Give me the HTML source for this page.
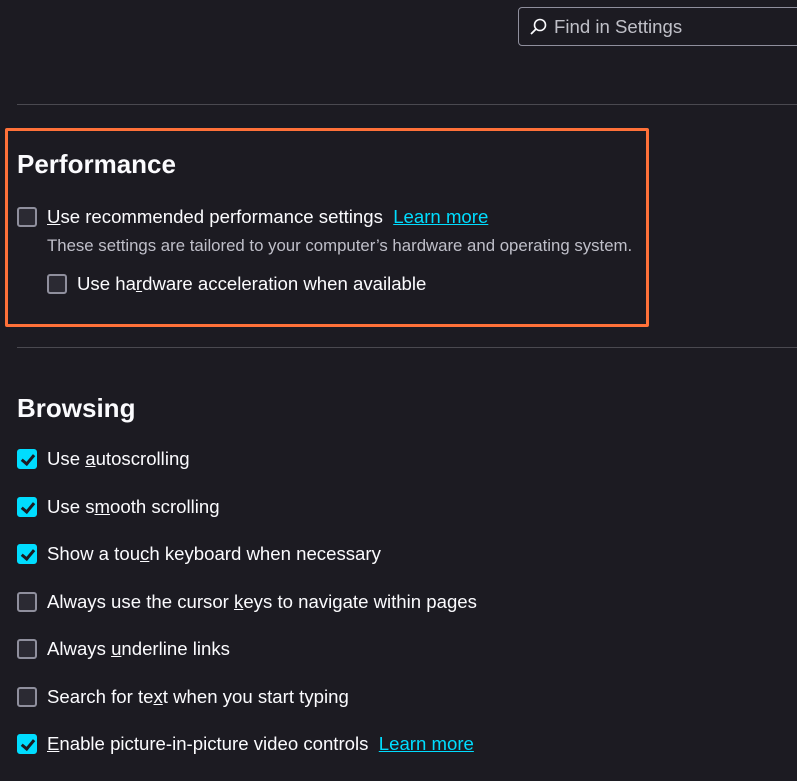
<!DOCTYPE html>
<html><head><style>
html,body{margin:0;padding:0;width:797px;height:781px;overflow:hidden;background:#1c1b22;color:#fbfbfe;font-family:"Liberation Sans",sans-serif;}
.a{position:absolute;white-space:nowrap}
.t{font-size:18.6px;line-height:20px}
.cb{position:absolute;width:16px;height:16px;border:2px solid #8f8f9d;border-radius:3px;background:#2b2a33;box-sizing:content-box}
.cb.on{background:#00ddff;border-color:#00ddff}
.cb.on::after{content:"";position:absolute;left:5px;top:1px;width:5px;height:10px;border:solid #1c1b22;border-width:0 3px 3px 0;transform:rotate(40deg)}
.ln{position:absolute;left:17px;right:0;height:1px;background:#4a4950}
.lk{color:#00ddff;text-decoration:underline}
h2{position:absolute;margin:0;font-size:26px;font-weight:bold;line-height:30px}
</style></head><body>
<div class="a" style="left:518px;top:7px;width:290px;height:39px;border:1px solid #8f8f9d;border-radius:4px;box-sizing:border-box"></div>
<svg class="a" style="left:529px;top:17px" width="20" height="20" viewBox="0 0 20 20"><circle cx="11" cy="8" r="5.5" fill="none" stroke="#fbfbfe" stroke-width="1.6"/><line x1="7" y1="12" x2="2" y2="17" stroke="#fbfbfe" stroke-width="1.8"/></svg>
<div class="a t" style="left:554px;top:17px;color:#c0c0c8">Find in Settings</div>
<div class="ln" style="top:104px"></div>
<div class="a" style="left:5px;top:128px;width:644px;height:199px;border:3px solid #ff7139;border-radius:2px;box-sizing:border-box"></div>
<h2 style="left:17px;top:149px">Performance</h2>
<div class="cb" style="left:17px;top:207px"></div>
<div class="a t" style="left:47px;top:207px"><u>U</u>se recommended performance settings&nbsp; <span class="lk">Learn more</span></div>
<div class="a" style="left:47px;top:236px;font-size:16.8px;color:#bfbfc9">These settings are tailored to your computer’s hardware and operating system.</div>
<div class="cb" style="left:47px;top:274px"></div>
<div class="a t" style="left:77px;top:274px">Use ha<u>r</u>dware acceleration when available</div>
<div class="ln" style="top:347px"></div>
<h2 style="left:17px;top:393px">Browsing</h2>
<div class="cb on" style="left:17px;top:449px"></div>
<div class="a t" style="left:47px;top:449px">Use <u>a</u>utoscrolling</div>
<div class="cb on" style="left:17px;top:497px"></div>
<div class="a t" style="left:47px;top:497px">Use s<u>m</u>ooth scrolling</div>
<div class="cb on" style="left:17px;top:544px"></div>
<div class="a t" style="left:47px;top:544px">Show a tou<u>c</u>h keyboard when necessary</div>
<div class="cb" style="left:17px;top:592px"></div>
<div class="a t" style="left:47px;top:592px">Always use the cursor <u>k</u>eys to navigate within pages</div>
<div class="cb" style="left:17px;top:639px"></div>
<div class="a t" style="left:47px;top:639px">Always <u>u</u>nderline links</div>
<div class="cb" style="left:17px;top:687px"></div>
<div class="a t" style="left:47px;top:687px">Search for te<u>x</u>t when you start typing</div>
<div class="cb on" style="left:17px;top:734px"></div>
<div class="a t" style="left:47px;top:734px"><u>E</u>nable picture-in-picture video controls&nbsp; <span class="lk">Learn more</span></div>
</body></html>
